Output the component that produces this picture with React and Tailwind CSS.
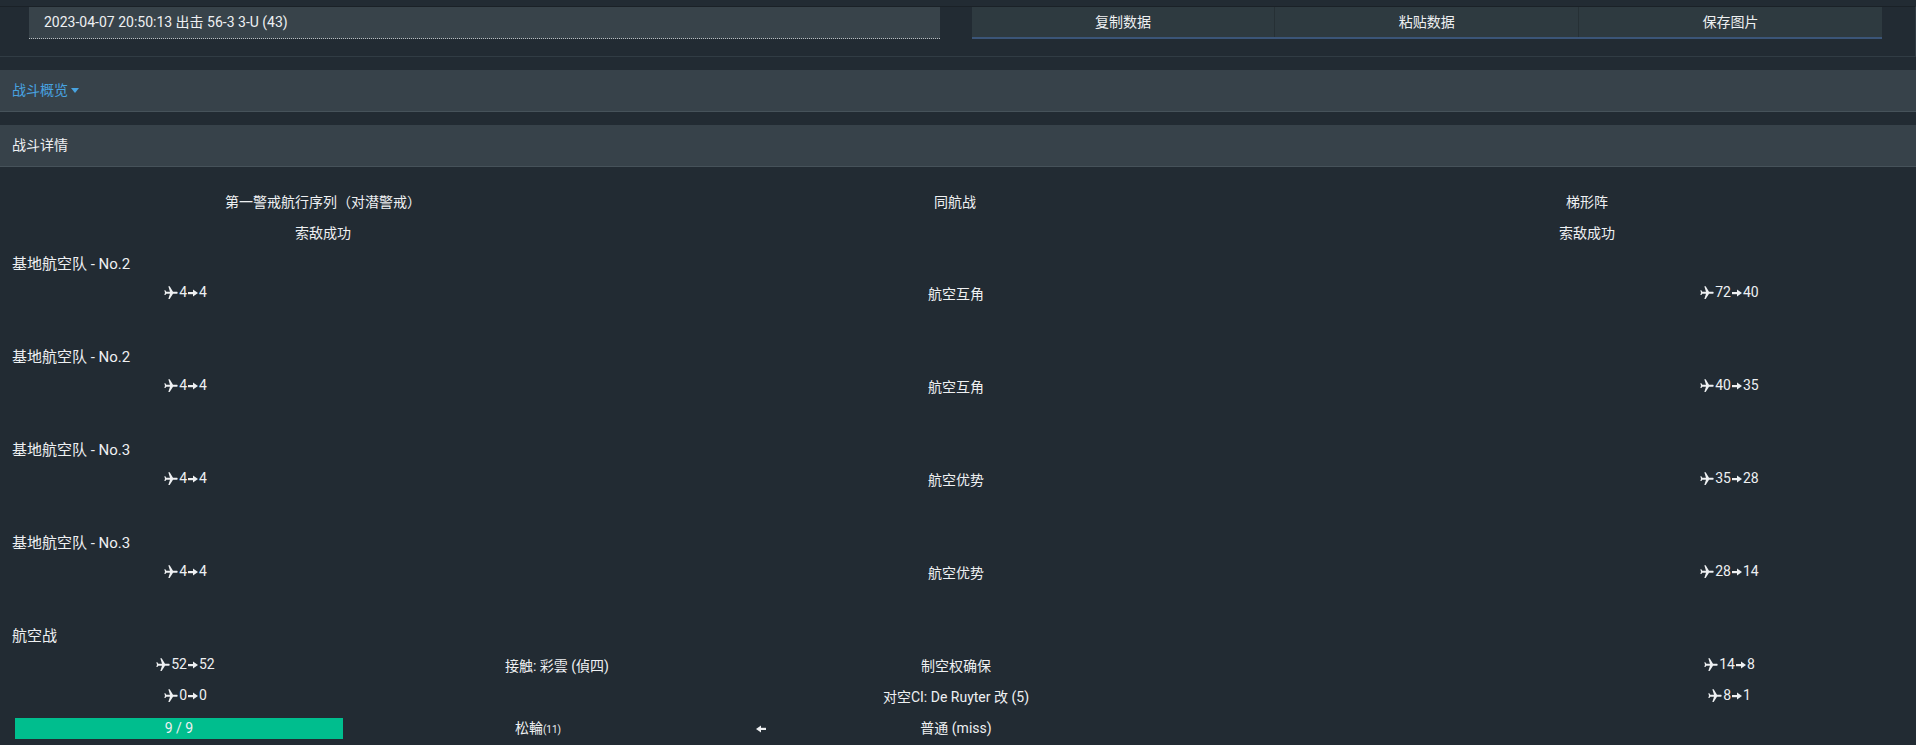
import React from 'react';

const Plane = () => (
    <svg viewBox="0 0 24 24" className="w-[16px] h-[16px] inline-block" fill="currentColor">
        <path
            transform="rotate(90 12 12)"
            d="M21 16v-2l-8-5V3.5c0-.83-.67-1.5-1.5-1.5S10 2.67 10 3.5V9l-8 5v2l8-2.5V19l-2 1.5V22l3.5-1 3.5 1v-1.5L13 19v-5.5l8 2.5z"
        />
    </svg>
);

// heavy short arrow, as in the original font
const Arrow = ({ left = false }) => (
    <svg viewBox="0 0 10 8" className={`w-[10px] h-[8px] inline-block mx-[1px] ${left ? 'rotate-180' : ''}`} fill="currentColor">
        <rect x="0" y="3" width="6" height="2.2" />
        <path d="M5 0.5 L10 4 L5 7.5 Z" />
    </svg>
);

const Planes = ({ from, to }) => (
    <span className="inline-flex items-center">
        <Plane />
        <span>{from}</span>
        <Arrow />
        <span>{to}</span>
    </span>
);

const Row3 = ({ cells }) => (
    <div className="grid grid-cols-[632px_632px_632px] h-[31px] items-center text-center">
        {cells.map((c, i) => (
            <div key={i}>{c}</div>
        ))}
    </div>
);

const Row5 = ({ cells }) => (
    <div className="grid grid-cols-[356px_388px_410px_388px_1fr] h-[31px] items-center text-center">
        {cells.map((c, i) => (
            <div key={i}>{c}</div>
        ))}
    </div>
);

const Title = ({ children }) => (
    <div className="h-[30px] flex items-center pl-[5px] text-[15px]">{children}</div>
);

const bases = [
    { name: '基地航空队 - No.2', left: [4, 4], mid: '航空互角', right: [72, 40] },
    { name: '基地航空队 - No.2', left: [4, 4], mid: '航空互角', right: [40, 35] },
    { name: '基地航空队 - No.3', left: [4, 4], mid: '航空优势', right: [35, 28] },
    { name: '基地航空队 - No.3', left: [4, 4], mid: '航空优势', right: [28, 14] },
];

const App = () => {
    return (
        <div className="h-screen overflow-hidden bg-[#222b33] text-[#eef0f2] text-[14px] font-['Roboto','Noto_Sans_CJK_SC',sans-serif]">
            <div className="h-[6px]" />

            {/* top toolbar */}
            <div className="flex gap-[32px] pl-[29px] pr-[33px] pb-[17px] border-t border-t-[#1a2127] border-b border-b-[#313c44] border-r border-r-[#313c44]">
                <div className="w-[911px] h-[32px] bg-[#38434a] border-b border-dotted border-b-[#b8bec2] flex items-center pl-[15px]">
                    2023-04-07 20:50:13 出击 56-3 3-U (43)
                </div>
                <div className="w-[911px] h-[32px] flex border-b-2 border-b-[#3b5578]">
                    {['复制数据', '粘贴数据', '保存图片'].map((t, i) => (
                        <div
                            key={t}
                            className={`flex-1 bg-[#2e3a40] flex items-center justify-center ${i < 2 ? 'border-r border-r-[#263035]' : ''}`}
                        >
                            {t}
                        </div>
                    ))}
                </div>
            </div>

            {/* panels */}
            <div className="mt-[13px] h-[42px] bg-[#37424a] border-b border-b-[#46525a] flex items-center pl-[12px] text-[#48a3e0]">
                战斗概览
                <span className="ml-[3px] inline-block border-x-[4px] border-x-transparent border-t-[5px] border-t-[#48a3e0]" />
            </div>
            <div className="mt-[13px] h-[42px] bg-[#37424a] border-b border-b-[#46525a] flex items-center pl-[12px]">
                战斗详情
            </div>

            {/* detail body */}
            <div className="pt-[20px] px-[7px]">
                <Row3 cells={['第一警戒航行序列（对潜警戒）', '同航战', '梯形阵']} />
                <Row3 cells={['索敌成功', '', '索敌成功']} />

                {bases.map((b, i) => (
                    <div key={i}>
                        <Title>{b.name}</Title>
                        <Row5
                            cells={[
                                <Planes from={b.left[0]} to={b.left[1]} />,
                                '',
                                b.mid,
                                '',
                                <Planes from={b.right[0]} to={b.right[1]} />,
                            ]}
                        />
                        <div className="h-[32px]" />
                    </div>
                ))}

                <Title>航空战</Title>
                <Row5
                    cells={[
                        <Planes from={52} to={52} />,
                        '接触: 彩雲 (偵四)',
                        '制空权确保',
                        '',
                        <Planes from={14} to={8} />,
                    ]}
                />
                <Row5
                    cells={[
                        <Planes from={0} to={0} />,
                        '',
                        '对空CI: De Ruyter 改 (5)',
                        '',
                        <Planes from={8} to={1} />,
                    ]}
                />

                {/* attack row */}
                <div className="flex h-[31px] items-center text-center">
                    <div className="w-[356px] pl-[8px]">
                        <div className="w-[328px] h-[21px] bg-[#00be8e] flex items-center justify-center">9 / 9</div>
                    </div>
                    <div className="w-[350px]">
                        松輪<span className="text-[10px]">(11)</span>
                    </div>
                    <div className="w-[96px] flex justify-center">
                        <Arrow left />
                    </div>
                    <div className="w-[294px]">普通 (miss)</div>
                </div>
            </div>
        </div>
    );
};

export default App;
